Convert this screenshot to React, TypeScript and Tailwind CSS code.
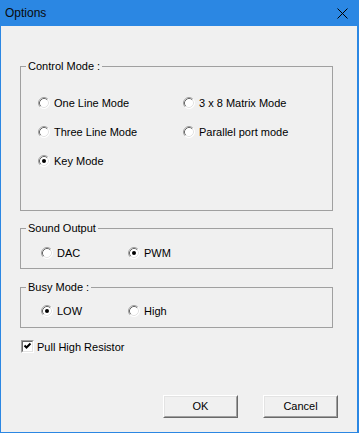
import React from "react";

const Radio = ({ checked }: { checked?: boolean }) => (
  <svg width="12" height="12" viewBox="0 0 12 12" className="shrink-0">
    <circle cx="6" cy="6" r="5.5" fill="#ffffff" />
    <path d="M2.11 9.89 A5.5 5.5 0 0 1 9.89 2.11" fill="none" stroke="#a0a0a0" strokeWidth="1" />
    <path d="M9.89 2.11 A5.5 5.5 0 0 1 2.11 9.89" fill="none" stroke="#ffffff" strokeWidth="1" />
    <path d="M2.82 9.18 A4.5 4.5 0 0 1 9.18 2.82" fill="none" stroke="#696969" strokeWidth="1" />
    <path d="M9.18 2.82 A4.5 4.5 0 0 1 2.82 9.18" fill="none" stroke="#e3e3e3" strokeWidth="1" />
    {checked && <circle cx="6" cy="6" r="2" fill="#000000" />}
  </svg>
);

const RadioItem = ({ label, checked, className = "" }: { label: string; checked?: boolean; className?: string }) => (
  <div className={`flex items-center gap-[4px] h-[16px] ${className}`}>
    <Radio checked={checked} />
    <span className="leading-[16px]">{label}</span>
  </div>
);

const Group = ({ title, className = "", children }: { title: string; className?: string; children: React.ReactNode }) => (
  <fieldset className={`w-[313px] border border-[#a0a0a0] ${className}`}>
    <legend className="ml-[5px] px-[2px] leading-[14px]">{title}</legend>
    {children}
  </fieldset>
);

const Button = ({ label }: { label: string }) => (
  <div className="w-[75px] h-[23px] border border-t-white border-l-white border-b-[#696969] border-r-[#696969]">
    <div className="h-full border border-t-[#e3e3e3] border-l-[#e3e3e3] border-b-[#a0a0a0] border-r-[#a0a0a0] bg-[#f0f0f0] flex items-center justify-center">
      {label}
    </div>
  </div>
);

export default function App() {
  return (
    <div className="w-[359px] h-[433px] bg-[#2b87e3] pl-px pr-[2px] pb-px flex flex-col font-['Liberation_Sans',Arial,sans-serif] text-black">
      {/* title bar */}
      <div className="h-[26px] shrink-0 flex items-center justify-between pl-[4px] pr-[9px]">
        <span className="text-[12px] text-[#0a0a0a]">Options</span>
        <svg width="11" height="11" viewBox="0 0 11 11">
          <path d="M0.5 0.5 L10.5 10.5 M10.5 0.5 L0.5 10.5" stroke="#000000" strokeWidth="1" />
        </svg>
      </div>

      <div className="flex-1 bg-[#f0f0f0] pl-[19px] pt-[33px] text-[11px]">
        <Group title="Control Mode :">
          <div className="pl-[17px] pt-[22px] pb-[41px] flex">
            <div className="w-[145px] flex flex-col gap-[13px]">
              <RadioItem label="One Line Mode" />
              <RadioItem label="Three Line Mode" />
              <RadioItem label="Key Mode" checked />
            </div>
            <div className="flex flex-col gap-[13px]">
              <RadioItem label="3 x 8 Matrix Mode" />
              <RadioItem label="Parallel port mode" />
            </div>
          </div>
        </Group>

        <Group title="Sound Output" className="mt-[10px]">
          <div className="pl-[20px] pt-[10px] pb-[7px] flex">
            <RadioItem label="DAC" className="w-[87px]" />
            <RadioItem label="PWM" checked />
          </div>
        </Group>

        <Group title="Busy Mode :" className="mt-[11px]">
          <div className="pl-[20px] pt-[9px] pb-[8px] flex">
            <RadioItem label="LOW" checked className="w-[87px]" />
            <RadioItem label="High" />
          </div>
        </Group>

        <div className="mt-[12px] ml-px flex items-center gap-[3px] h-[13px]">
          <div className="w-[13px] h-[13px] border border-t-[#a0a0a0] border-l-[#a0a0a0] border-b-white border-r-white">
            <div className="w-full h-full border border-t-[#696969] border-l-[#696969] border-b-[#e3e3e3] border-r-[#e3e3e3] bg-white">
              <svg width="9" height="9" viewBox="0 0 9 9" className="block">
                <path d="M1.5 3.5 L3.5 5.5 L7.5 1.5" fill="none" stroke="#000000" strokeWidth="2" />
              </svg>
            </div>
          </div>
          <span className="leading-[16px]">Pull High Resistor</span>
        </div>

        <div className="mt-[42px] pl-[143px] flex gap-[25px]">
          <Button label="OK" />
          <Button label="Cancel" />
        </div>
      </div>
    </div>
  );
}
